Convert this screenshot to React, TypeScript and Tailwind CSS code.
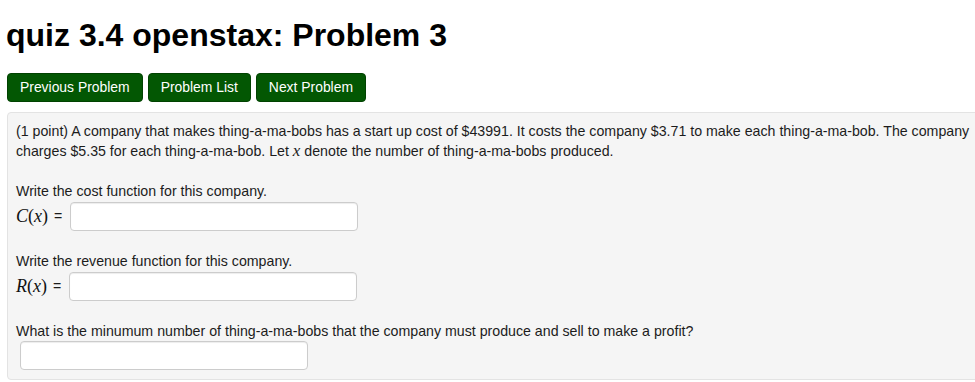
import React from 'react'

const SANS = "font-['Liberation_Sans',Arial,sans-serif]"
const SERIF = "font-['Liberation_Serif','Times_New_Roman',serif]"

function MathVar({ children }: { children: React.ReactNode }) {
  return <span className={`${SERIF} italic text-[17px] leading-none`}>{children}</span>
}

function AnswerInput({ className = '' }: { className?: string }) {
  return (
    <input
      type="text"
      className={`h-[29px] w-[288px] rounded-[4px] border border-[#cccccc] bg-white px-2 outline-none shadow-[inset_0_1px_1px_rgba(0,0,0,0.075)] ${className}`}
    />
  )
}

function FnRow({ name }: { name: string }) {
  return (
    <div className="flex h-[30px] items-center">
      <span className={`${SERIF} text-[18px] text-[#111] leading-none`}>
        <i>{name}</i>(<i>x</i>)
      </span>
      <span className="ml-[6px] mr-[8px]">=</span>
      <AnswerInput />
    </div>
  )
}

export default function App() {
  const buttons = ['Previous Problem', 'Problem List', 'Next Problem']

  return (
    <div className={`w-[975px] h-[382px] overflow-hidden bg-white pl-[7px] ${SANS}`}>
      {/* Title */}
      <h1 className="mt-[18px] -ml-px text-[32px] leading-[34px] font-bold text-black whitespace-nowrap">
        quiz 3.4 openstax: Problem 3
      </h1>

      {/* Navigation */}
      <div className="mt-[21px] flex gap-[5px]">
        {buttons.map((label) => (
          <button
            key={label}
            className="h-[29px] rounded-[4px] border border-[#014201] bg-[#035703] px-3 text-[13.9px] text-white"
          >
            {label}
          </button>
        ))}
      </div>

      {/* Problem body */}
      <div className="mt-[10px] w-[1003px] rounded-[4px] border border-[#e3e3e3] bg-[#f5f5f5] px-[8px] pt-[8px] pb-[9px] text-[14.2px] leading-[20px] text-[#1c1c1c]">
        <p>
          (1 point) A company that makes thing-a-ma-bobs has a start up cost of $43991. It costs the company
          $3.71 to make each thing-a-ma-bob. The company charges $5.35 for each thing-a-ma-bob. Let{' '}
          <MathVar>x</MathVar> denote the number of thing-a-ma-bobs produced.
        </p>
        <div className="h-5" />

        <p>Write the cost function for this company.</p>
        <FnRow name="C" />
        <div className="h-5" />

        <p>Write the revenue function for this company.</p>
        <FnRow name="R" />
        <div className="h-5" />

        <p>What is the minumum number of thing-a-ma-bobs that the company must produce and sell to make a profit?</p>
        <div className="flex h-[29px] items-center">
          <AnswerInput className="ml-[4px]" />
        </div>
      </div>
    </div>
  )
}
